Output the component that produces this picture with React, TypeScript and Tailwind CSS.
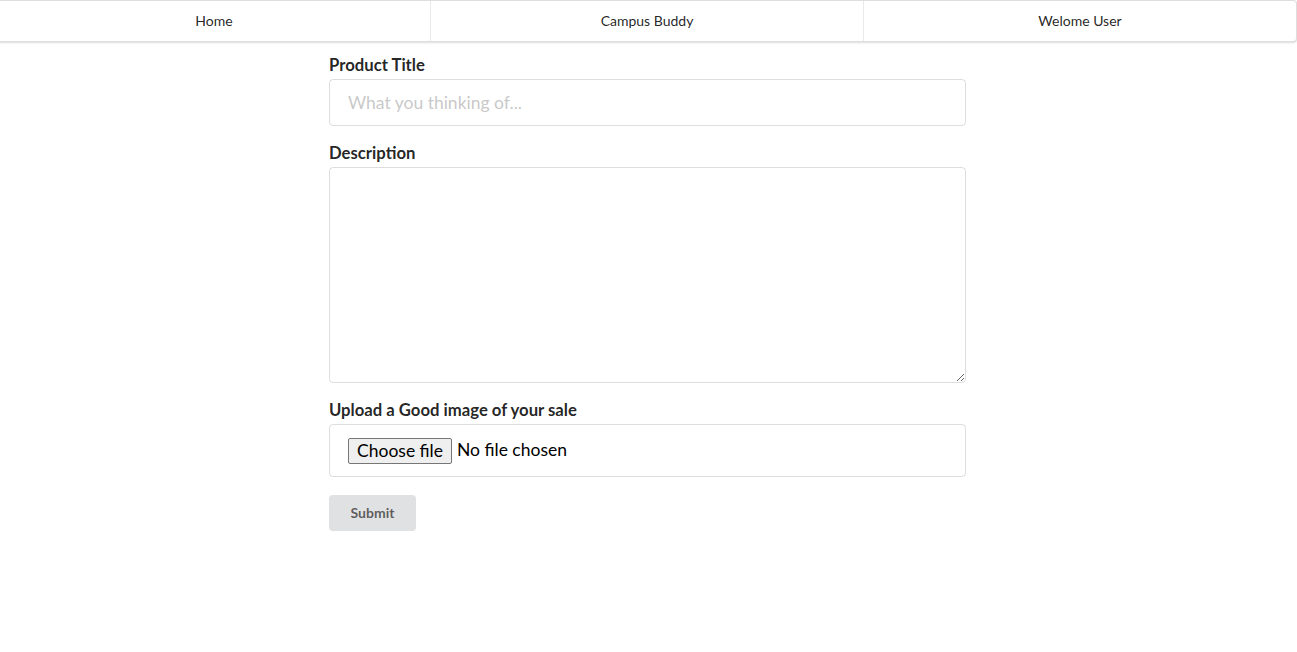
import React from "react";

const items = ["Home", "Campus Buddy", "Welome User"];

export default function App() {
  return (
    <div className="min-h-screen overflow-hidden bg-white font-['Lato','Liberation_Sans',sans-serif] text-[14px] text-[rgba(0,0,0,0.87)]">
      <div className="ml-[-3px] flex h-[42px] w-[1300px] rounded-[4px] border border-[rgba(34,36,38,0.15)] bg-white shadow-[0_1px_2px_0_rgba(34,36,38,0.15)]">
        {items.map((item, index) => (
          <div
            key={item}
            className={
              "flex flex-1 items-center justify-center leading-none " +
              (index < items.length - 1 ? "border-r border-[rgba(34,36,38,0.1)]" : "")
            }
          >
            {item}
          </div>
        ))}
      </div>

      <form className="ml-[329px] mt-[13px] w-[637px]" onSubmit={(e) => e.preventDefault()}>
        <div className="mb-[17px]">
          <label className="mb-[4px] block pt-[1px] text-[16.7px] font-bold leading-[19px]">Product Title</label>
          <input
            type="text"
            placeholder="What you thinking of..."
            className="block h-[47px] w-full rounded-[4px] border border-[rgba(34,36,38,0.15)] px-[18px] text-[17.5px] outline-none placeholder:text-[rgba(191,191,191,0.87)]"
          />
        </div>

        <div className="mb-[17px]">
          <label className="mb-[4px] block pt-[1px] text-[16.7px] font-bold leading-[19px]">Description</label>
          <textarea className="block h-[216px] w-full resize-y rounded-[4px] border border-[rgba(34,36,38,0.15)] px-[18px] py-[12px] text-[17.5px] outline-none" />
        </div>

        <div className="mb-[18px]">
          <label className="mb-[4px] block pt-[1px] text-[16.7px] font-bold leading-[19px]">Upload a Good image of your sale</label>
          <label className="flex h-[53px] cursor-pointer items-center rounded-[4px] border border-[rgba(34,36,38,0.15)] px-[18px] text-[17.5px] text-black">
            <input type="file" className="hidden" />
            <span className="flex h-[26px] items-center rounded-[2px] border border-[#767676] bg-[#efefef] px-[8px] leading-none">
              Choose file
            </span>
            <span className="ml-[5px]">No file chosen</span>
          </label>
        </div>

        <button
          type="submit"
          className="h-[36px] w-[87px] rounded-[4px] bg-[#e0e1e2] text-[14px] font-bold leading-none text-[rgba(0,0,0,0.6)]"
        >
          Submit
        </button>
      </form>
    </div>
  );
}
